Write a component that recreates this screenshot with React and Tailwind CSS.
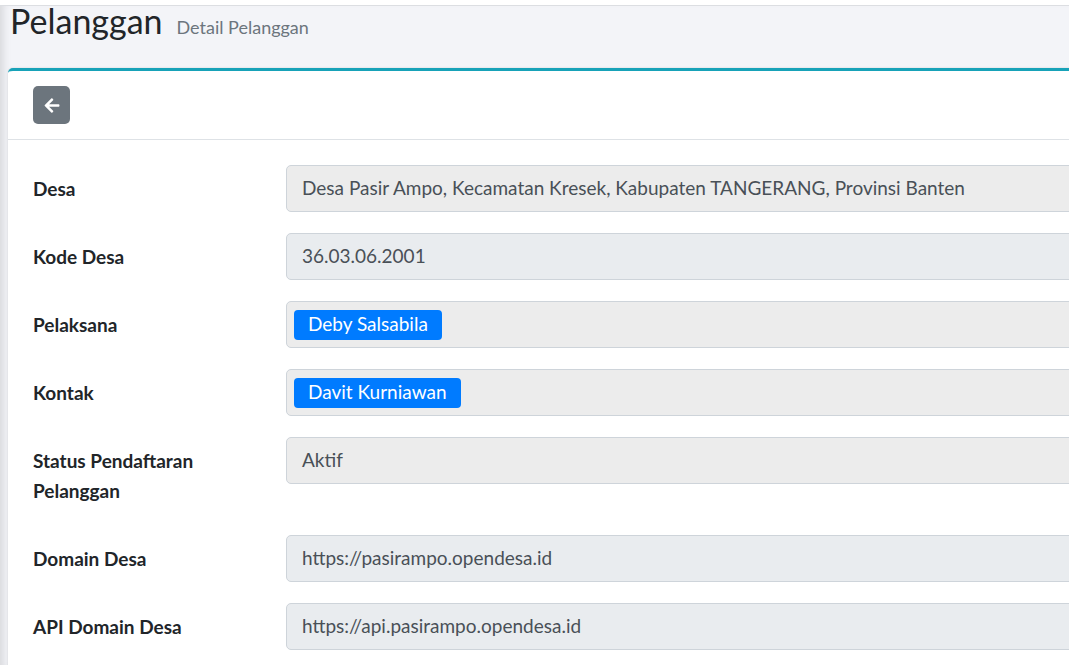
import React from 'react';

const rows = [
  { label: 'Desa', value: 'Desa Pasir Ampo, Kecamatan Kresek, Kabupaten TANGERANG, Provinsi Banten', bg: 'bg-[#ececec]' },
  { label: 'Kode Desa', value: '36.03.06.2001', bg: 'bg-[#e9ecef]' },
  { label: 'Pelaksana', badge: 'Deby Salsabila', bg: 'bg-[#ececec]' },
  { label: 'Kontak', badge: 'Davit Kurniawan', bg: 'bg-[#ececec]' },
  { label: 'Status Pendaftaran Pelanggan', value: 'Aktif', bg: 'bg-[#ececec]' },
  { label: 'Domain Desa', value: 'https://pasirampo.opendesa.id', bg: 'bg-[#e9ecef]' },
  { label: 'API Domain Desa', value: 'https://api.pasirampo.opendesa.id', bg: 'bg-[#e9ecef]' },
];

const ArrowLeft = () => (
  <svg viewBox="0 0 448 512" className="w-[16px] h-[17px]" fill="currentColor">
    <path d="M257.5 445.1l-22.2 22.2c-9.4 9.4-24.6 9.4-33.9 0L7 273c-9.4-9.4-9.4-24.6 0-33.9L201.4 44.7c9.4-9.4 24.6-9.4 33.9 0l22.2 22.2c9.5 9.5 9.3 25-.4 34.3L136.6 216H424c13.3 0 24 10.7 24 24v32c0 13.3-10.7 24-24 24H136.6l120.5 114.8c9.8 9.3 10 24.8.4 34.3z" />
  </svg>
);

const App = () => {
  return (
    <div
      className="w-[1069px] h-[665px] overflow-hidden bg-white"
      style={{ fontFamily: 'Lato, "Open Sans", sans-serif' }}
    >
      <div className="mt-[5px] h-[660px] border-t border-[#dcdee2] bg-[#f3f4f8] shadow-[inset_9px_0_8px_-6px_rgba(0,0,0,0.12)] flex flex-col">
        {/* Content header */}
        <div className="flex items-baseline gap-[14px] pl-[10px] h-[62px] shrink-0">
          <h1 className="text-[34px] leading-[30px] text-[#212529]">Pelanggan</h1>
          <span className="text-[18px] text-[#6c757d]">Detail Pelanggan</span>
        </div>

        {/* Card */}
        <div className="ml-[8px] w-[1250px] flex-1 bg-white border-t-[3px] border-[#17a2b8] rounded-tl-[5px] shadow-[0_0_2px_rgba(0,0,0,0.15)]">
          <div className="h-[69px] px-[25px] flex items-center border-b border-[#dee2e6]">
            <button className="w-[37px] h-[38px] bg-[#6c757d] rounded-[5px] text-white flex items-center justify-center">
              <ArrowLeft />
            </button>
          </div>

          <div className="px-[25px] pt-[25px]">
            {rows.map((row) => (
              <div key={row.label} className="flex mb-[21px] items-start">
                <div className="w-[253px] shrink-0 pr-[40px] py-[8.5px] text-[19px] leading-[30px] font-bold text-[#212529]">
                  {row.label}
                </div>
                <div
                  className={`flex-1 h-[47px] ${row.bg} border border-[#ced4da] rounded-[5px] flex items-center ${
                    row.badge ? 'px-[7px]' : 'px-[15px]'
                  } text-[19px] text-[#495057]`}
                >
                  {row.badge ? (
                    <span className="bg-[#007bff] text-white rounded-[4px] h-[30px] px-[14px] flex items-center">
                      {row.badge}
                    </span>
                  ) : (
                    row.value
                  )}
                </div>
              </div>
            ))}
          </div>
        </div>
      </div>
    </div>
  );
};

export default App;
